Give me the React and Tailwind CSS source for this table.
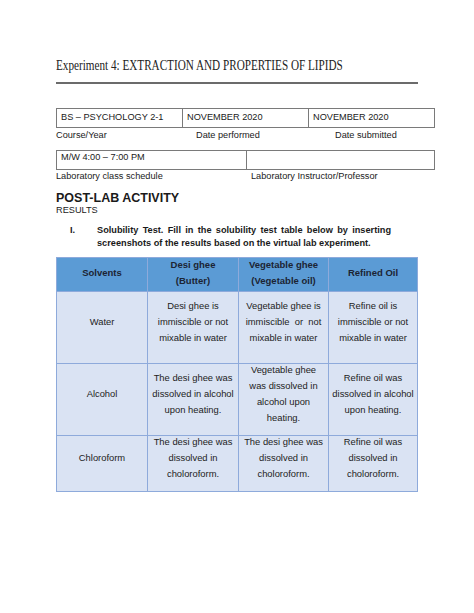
import React from "react";

const sans = { fontFamily: '"Liberation Sans", Arial, sans-serif' };

const rows = [
  {
    h: "h-[72px]",
    cells: [
      "Water",
      ["Desi ghee is", "immiscible or not", "mixable in water"],
      ["Vegetable ghee is", "immiscible  or  not", "mixable in water"],
      ["Refine oil is", "immiscible or not", "mixable in water"],
    ],
  },
  {
    h: "h-[72px]",
    cells: [
      "Alcohol",
      ["The desi ghee was", "dissolved in alcohol", "upon heating."],
      ["Vegetable ghee", "was dissolved in", "alcohol upon", "heating."],
      ["Refine oil was", "dissolved in alcohol", "upon heating."],
    ],
  },
  {
    h: "h-[56px]",
    cells: [
      "Chloroform",
      ["The desi ghee was", "dissolved in", "choloroform."],
      ["The desi ghee was", "dissolved in", "choloroform."],
      ["Refine oil was", "dissolved in", "choloroform."],
    ],
  },
];

function Lines({ v }) {
  const arr = Array.isArray(v) ? v : [v];
  return (
    <div className="text-center whitespace-pre">
      {arr.map((l, i) => (
        <div key={i}>{l}</div>
      ))}
    </div>
  );
}

export default function App() {
  return (
    <div className="w-[474px] h-[613px] bg-white text-[#1a1a1a] overflow-hidden" style={sans}>
      <div className="pl-[56px] pt-[53px]">
        <div className="h-[20px]">
          <div
            className="inline-block origin-left scale-x-[0.745] whitespace-nowrap text-[15px] leading-[20px] text-[#222]"
            style={{ fontFamily: '"Liberation Serif", serif' }}
          >
            Experiment 4: EXTRACTION AND PROPERTIES OF LIPIDS
          </div>
        </div>
        <div className="mt-[9px] h-[2px] w-[362px] bg-[#6b6b6b]" />

        <div className="mt-[24px] w-[379px] h-[20px] border border-[#7a7a7a] flex text-[9.2px] leading-[14px]">
          <div className="w-[126px] border-r border-[#7a7a7a] pl-[4px] pt-[1px]">BS – PSYCHOLOGY 2-1</div>
          <div className="w-[126px] border-r border-[#7a7a7a] pl-[4px] pt-[1px]">NOVEMBER 2020</div>
          <div className="flex-1 pl-[4px] pt-[1px]">NOVEMBER 2020</div>
        </div>
        <div className="flex text-[9.2px] leading-[14px]">
          <div className="w-[140px]">Course/Year</div>
          <div className="w-[139px]">Date performed</div>
          <div>Date submitted</div>
        </div>

        <div className="mt-[8px] w-[379px] h-[20px] border border-[#7a7a7a] flex text-[9.2px] leading-[12px]">
          <div className="w-[190px] border-r border-[#7a7a7a] pl-[4px]">M/W 4:00 – 7:00 PM</div>
          <div className="flex-1" />
        </div>
        <div className="flex text-[9.2px] leading-[12px]">
          <div className="w-[195px]">Laboratory class schedule</div>
          <div>Laboratory Instructor/Professor</div>
        </div>

        <div className="mt-[8px] text-[12.5px] leading-[16px] font-bold">POST-LAB ACTIVITY</div>
        <div className="-mt-[2px] text-[9.2px] leading-[12px]">RESULTS</div>

        <div className="mt-[8px] flex text-[9.2px] leading-[13px] font-bold">
          <div className="pl-[14px] w-[41px]">I.</div>
          <div className="w-[294px] text-justify">
            Solubility Test. Fill in the solubility test table below by inserting screenshots of the results based on the virtual lab experiment.
          </div>
        </div>

        <div className="mt-[7px] w-[362px] border border-[#8eaadb] text-[9.4px] leading-[16px] text-[#222]">
          <div className="flex h-[33px] bg-[#5b9bd5] font-bold text-[#1c2433] text-[9.5px]">
            <div className="w-[91px] border-r border-[#8eaadb] flex items-center justify-center pb-[3px]">Solvents</div>
            <div className="w-[91px] border-r border-[#8eaadb] flex items-center justify-center pb-[3px]">
              <Lines v={["Desi ghee", "(Butter)"]} />
            </div>
            <div className="w-[90px] border-r border-[#8eaadb] flex items-center justify-center pb-[3px]">
              <Lines v={["Vegetable ghee", "(Vegetable oil)"]} />
            </div>
            <div className="flex-1 flex items-center justify-center pb-[3px]">Refined Oil</div>
          </div>
          {rows.map((r, ri) => (
            <div key={ri} className={`flex ${r.h} bg-[#dae3f3] border-t border-[#8eaadb]`}>
              {r.cells.map((c, ci) => (
                <div
                  key={ci}
                  className={`${ci === 0 ? "w-[91px]" : ci === 1 ? "w-[91px]" : ci === 2 ? "w-[90px]" : "flex-1"} ${ci < 3 ? "border-r border-[#8eaadb]" : ""} flex items-center justify-center pb-[12px]`}
                >
                  <Lines v={c} />
                </div>
              ))}
            </div>
          ))}
        </div>
      </div>
    </div>
  );
}
